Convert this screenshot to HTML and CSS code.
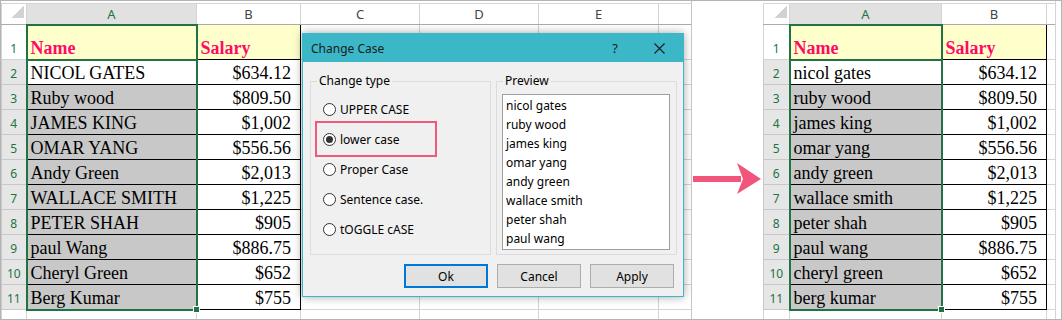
FILE: index.html
```html
<!DOCTYPE html>
<html lang="en">
<head>
    <meta charset="UTF-8">
    <title>Change Case</title>
    <link rel="stylesheet" href="styles.css">
</head>
<body>
    <div class="frame">
        <!-- hoja original con el dialogo encima -->
        <div class="sheet sheetLeft">
            <table class="grid">
                <colgroup>
                    <col style="width:25px"><col style="width:170px"><col style="width:104px">
                    <col style="width:119px"><col style="width:119px"><col style="width:120px"><col style="width:33px">
                </colgroup>
                <tr class="hdr">
                    <td class="corner"><span class="tri"></span></td>
                    <td class="ch sel">A</td><td class="ch">B</td><td class="ch">C</td>
                    <td class="ch">D</td><td class="ch">E</td><td class="ch"></td>
                </tr>
                <tr class="r1">
                    <td class="rh">1</td>
                    <td class="nm top title">Name</td><td class="sal title">Salary</td>
                    <td></td><td></td><td></td><td></td>
                </tr>
                <tr><td class="rh">2</td><td class="nm active">NICOL GATES</td><td class="sal">$634.12</td><td></td><td></td><td></td><td></td></tr>
                <tr><td class="rh">3</td><td class="nm">Ruby wood</td><td class="sal">$809.50</td><td></td><td></td><td></td><td></td></tr>
                <tr><td class="rh">4</td><td class="nm">JAMES KING</td><td class="sal">$1,002</td><td></td><td></td><td></td><td></td></tr>
                <tr><td class="rh">5</td><td class="nm">OMAR YANG</td><td class="sal">$556.56</td><td></td><td></td><td></td><td></td></tr>
                <tr><td class="rh">6</td><td class="nm">Andy Green</td><td class="sal">$2,013</td><td></td><td></td><td></td><td></td></tr>
                <tr><td class="rh">7</td><td class="nm">WALLACE SMITH</td><td class="sal">$1,225</td><td></td><td></td><td></td><td></td></tr>
                <tr><td class="rh">8</td><td class="nm">PETER SHAH</td><td class="sal">$905</td><td></td><td></td><td></td><td></td></tr>
                <tr><td class="rh">9</td><td class="nm">paul Wang</td><td class="sal">$886.75</td><td></td><td></td><td></td><td></td></tr>
                <tr><td class="rh">10</td><td class="nm">Cheryl Green</td><td class="sal">$652</td><td></td><td></td><td></td><td></td></tr>
                <tr><td class="rh">11</td><td class="nm last">Berg Kumar<span class="handle"></span></td><td class="sal">$755</td><td></td><td></td><td></td><td></td></tr>
                <tr class="tail"><td class="rh blank"></td><td></td><td></td><td></td><td></td><td></td><td></td></tr>
            </table>

            <div class="dialog">
                <div class="dlgTitle">
                    <span>Change Case</span>
                    <span class="dlgCtrls">
                        <span class="help">?</span>
                        <svg class="closeIcon" width="11" height="11" viewBox="0 0 11 11">
                            <path d="M0.5 0.5 L10.5 10.5 M10.5 0.5 L0.5 10.5" stroke="#1a1a1a" stroke-width="1.1" fill="none"/>
                        </svg>
                    </span>
                </div>
                <div class="dlgBody">
                    <div class="groups">
                        <fieldset class="grp grpType">
                            <legend>Change type</legend>
                            <div class="opt"><span class="radio"></span>UPPER CASE</div>
                            <div class="opt marked"><span class="radio checked"></span>lower case</div>
                            <div class="opt"><span class="radio"></span>Proper Case</div>
                            <div class="opt"><span class="radio"></span>Sentence case.</div>
                            <div class="opt"><span class="radio"></span>tOGGLE cASE</div>
                        </fieldset>
                        <fieldset class="grp grpPreview">
                            <legend>Preview</legend>
                            <div class="listbox">
                                <div>nicol gates</div>
                                <div>ruby wood</div>
                                <div>james king</div>
                                <div>omar yang</div>
                                <div>andy green</div>
                                <div>wallace smith</div>
                                <div>peter shah</div>
                                <div>paul wang</div>
                            </div>
                        </fieldset>
                    </div>
                    <div class="dlgButtons">
                        <button class="btn btnDefault">Ok</button>
                        <button class="btn">Cancel</button>
                        <button class="btn">Apply</button>
                    </div>
                </div>
            </div>
        </div>

        <!-- flecha -->
        <div class="arrowArea">
            <svg width="68" height="31" viewBox="0 0 68 31">
                <rect x="0" y="13" width="48" height="6" fill="#f2557b"/>
                <path d="M44 0 L68 16 L44 31 L50 16 Z" fill="#f2557b"/>
            </svg>
        </div>

        <!-- hoja resultado -->
        <div class="sheet sheetRight">
            <table class="grid">
                <colgroup>
                    <col style="width:26px"><col style="width:152px"><col style="width:105px"><col style="width:9px">
                </colgroup>
                <tr class="hdr">
                    <td class="corner"><span class="tri"></span></td>
                    <td class="ch sel">A</td><td class="ch">B</td><td class="ch"></td>
                </tr>
                <tr class="r1">
                    <td class="rh">1</td>
                    <td class="nm top title">Name</td><td class="sal title">Salary</td><td></td>
                </tr>
                <tr><td class="rh">2</td><td class="nm active">nicol gates</td><td class="sal">$634.12</td><td></td></tr>
                <tr><td class="rh">3</td><td class="nm">ruby wood</td><td class="sal">$809.50</td><td></td></tr>
                <tr><td class="rh">4</td><td class="nm">james king</td><td class="sal">$1,002</td><td></td></tr>
                <tr><td class="rh">5</td><td class="nm">omar yang</td><td class="sal">$556.56</td><td></td></tr>
                <tr><td class="rh">6</td><td class="nm">andy green</td><td class="sal">$2,013</td><td></td></tr>
                <tr><td class="rh">7</td><td class="nm">wallace smith</td><td class="sal">$1,225</td><td></td></tr>
                <tr><td class="rh">8</td><td class="nm">peter shah</td><td class="sal">$905</td><td></td></tr>
                <tr><td class="rh">9</td><td class="nm">paul wang</td><td class="sal">$886.75</td><td></td></tr>
                <tr><td class="rh">10</td><td class="nm">cheryl green</td><td class="sal">$652</td><td></td></tr>
                <tr><td class="rh">11</td><td class="nm last">berg kumar<span class="handle"></span></td><td class="sal">$755</td><td></td></tr>
                <tr class="tail"><td class="rh blank"></td><td></td><td></td><td></td></tr>
            </table>
        </div>
    </div>
</body>
</html>
```

FILE: styles.css
```css
/* variables */
:root{
    --verdeExcel: #217346;
    --gris: #d4d4d4;
    --uiFont: "Noto Sans", "Open Sans", sans-serif;
}
body{
    margin: 0;
    background: #fff;
}
/* marco de toda la imagen */
.frame{
    width: 1060px;
    height: 318px;
    border: 1px solid #b4b4b4;
    display: flex;
    overflow: hidden;
}
/* hojas */
.sheet{
    padding-top: 2px;
    overflow: hidden;
}
.sheetLeft{
    position: relative;
    width: 690px;
    border-right: 1px solid #c4c4c4;
}
.sheetRight{
    width: 292px;
    border-right: 1px solid var(--gris);
}
.grid{
    border-collapse: collapse;
    table-layout: fixed;
    width: 100%;
}
.grid td{
    border: 1px solid var(--gris);
    padding: 0;
    white-space: nowrap;
    overflow: hidden;
}
.grid tr{
    height: 25px;
}
.grid tr.hdr{
    height: 21px;
}
.grid tr.r1{
    height: 35px;
}
/* cabeceras de columna */
.ch{
    font: 13px var(--uiFont);
    color: #444;
    text-align: center;
    background: #fff;
    border-bottom-color: #ababab !important;
}
.ch.sel{
    background: #e1e1e1;
    color: var(--verdeExcel);
    border-bottom: 2px solid var(--verdeExcel) !important;
}
.corner{
    text-align: right;
    vertical-align: bottom;
    border-bottom-color: #ababab !important;
}
.tri{
    display: inline-block;
    width: 13px;
    height: 13px;
    margin: 0 2px 2px 0;
    background: linear-gradient(to bottom right, transparent 50%, #d2d2d2 50%);
}
/* cabeceras de fila */
.rh{
    font: 12px var(--uiFont);
    color: var(--verdeExcel);
    text-align: center;
    vertical-align: bottom;
    line-height: 20px;
    background: #e6e6e6;
    border-color: #c8c8c8 !important;
}
.r1 .rh, .rh.blank{
    background: #fff;
    border-color: var(--gris) !important;
}
/* celdas con datos */
.nm, .sal{
    font: 18px "Liberation Serif", "Times New Roman", serif;
    color: #000;
    vertical-align: bottom;
    line-height: 21px;
    border: 1px solid #000 !important;
}
.nm{
    position: relative;
    padding-left: 3px !important;
    background: #c8c8c8;
    border-left: 2px solid var(--verdeExcel) !important;
    border-right: 2px solid var(--verdeExcel) !important;
}
.nm.active{
    background: #fff;
    border-top: 2px solid var(--verdeExcel) !important;
}
.nm.top{
    border-top: 2px solid var(--verdeExcel) !important;
    border-bottom: 2px solid var(--verdeExcel) !important;
}
.nm.last{
    overflow: visible;
    border-bottom: 2px solid var(--verdeExcel) !important;
}
.sal{
    text-align: right;
    padding-right: 9px !important;
    background: #fff;
}
.r1 .sal{
    text-align: left;
    padding: 0 0 0 3px !important;
    border-top-color: var(--gris) !important;
    border-left-color: var(--gris) !important;
}
.title{
    background: #ffffcc;
    color: #ff0a68;
    font-weight: bold;
}
.handle{
    position: absolute;
    right: -4px;
    bottom: -4px;
    width: 5px;
    height: 5px;
    background: var(--verdeExcel);
    border: 1px solid #fff;
}
/* dialogo */
.dialog{
    position: absolute;
    left: 301px;
    top: 32px;
    width: 380px;
    height: 262px;
    border: 1px solid #3cb7c7;
    background: #f0f0f0;
    box-shadow: 0 0 9px rgba(0,0,0,0.35);
    font: 12px var(--uiFont);
    color: #000;
}
.dlgTitle{
    height: 28px;
    background: #3cb7c7;
    display: flex;
    align-items: center;
    justify-content: space-between;
    padding: 0 18px 0 8px;
    color: #1a1a1a;
}
.dlgCtrls{
    display: flex;
    align-items: center;
    gap: 36px;
}
.help{
    font-size: 13px;
}
.dlgBody{
    padding: 12px 6px 0 7px;
}
.groups{
    display: flex;
    gap: 5px;
}
.grp{
    margin: 0;
    box-sizing: border-box;
    width: 181px;
    height: 181px;
    border: 1px solid #dcdcdc;
    padding: 6px 6px 0 6px;
    min-width: 0;
}
.grp legend{
    padding: 0 2px;
    line-height: 14px;
}
.opt{
    height: 30px;
    width: 116px;
    margin-left: 1px;
    padding-left: 5px;
    box-sizing: border-box;
    display: flex;
    align-items: center;
    gap: 4px;
}
.opt.marked{
    outline: 2px solid #f0587c;
    outline-offset: 1px;
}
.radio{
    width: 11px;
    height: 11px;
    border: 1px solid #333;
    border-radius: 50%;
    background: #fff;
    display: flex;
    align-items: center;
    justify-content: center;
    flex: none;
}
.radio.checked::after{
    content: "";
    width: 7px;
    height: 7px;
    border-radius: 50%;
    background: #333;
}
.grpPreview{
    padding-left: 5px;
}
.grpPreview legend{
    margin-left: 1px;
}
.listbox{
    box-sizing: border-box;
    width: 168px;
    height: 156px;
    border: 1px solid #a0a0a0;
    background: #fff;
    padding: 1px 0 0 3px;
    line-height: 19px;
}
.dlgButtons{
    display: flex;
    justify-content: flex-end;
    gap: 9px;
    padding: 9px 3px 0 0;
}
.btn{
    width: 84px;
    height: 24px;
    font: 12px var(--uiFont);
    color: #000;
    background: #e1e1e1;
    border: 1px solid #adadad;
    padding: 0;
}
.btnDefault{
    border: 2px solid #0078d7;
}
/* flecha */
.arrowArea{
    width: 71px;
    padding: 162px 0 0 1px;
    box-sizing: border-box;
}
```
